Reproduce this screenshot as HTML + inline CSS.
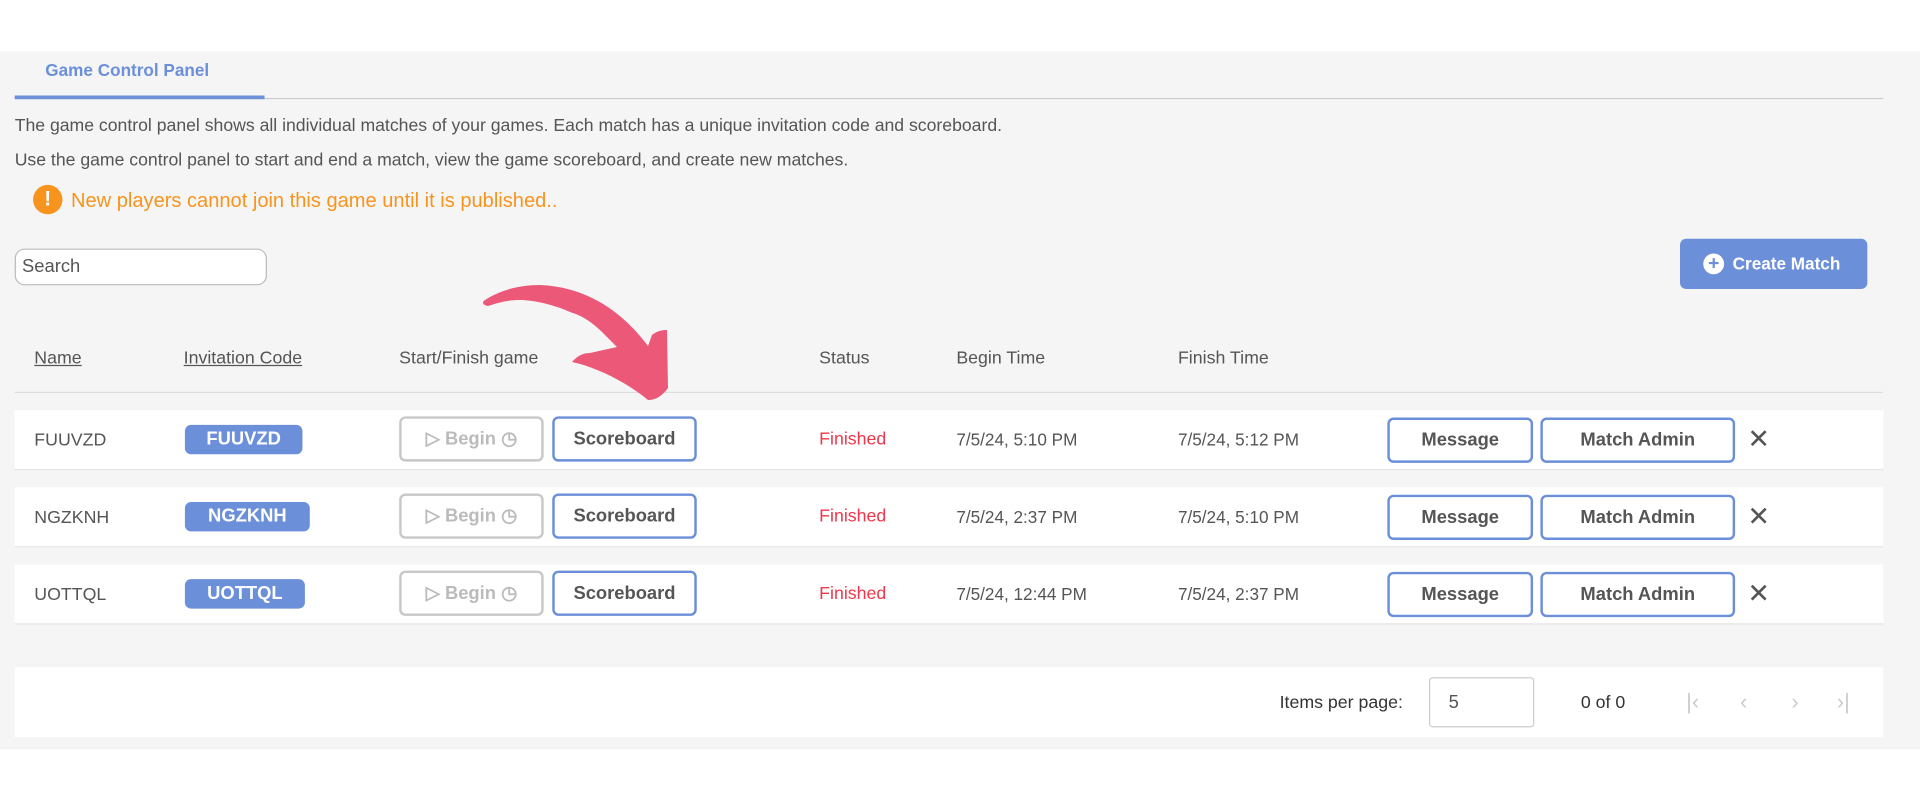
<!DOCTYPE html>
<html><head><meta charset="utf-8"><style>
html,body{margin:0;padding:0;width:1920px;height:800px;overflow:hidden;background:#fff;font-family:"Liberation Sans",sans-serif;}
#w{position:absolute;left:0;top:0;width:1568px;height:653px;transform:scale(1.22449);transform-origin:0 0;}
.a{position:absolute;white-space:nowrap;}
.bg{position:absolute;left:0;top:42px;width:1568px;height:570px;background:#f5f5f5;}
.row{position:absolute;left:12px;width:1526px;height:48px;background:#fff;border-bottom:1px solid #e4e4e4;}
.t{color:#555;font-size:14px;}
.badge{position:absolute;left:139px;top:12px;height:24px;line-height:24px;background:#6b8fd9;color:#fff;font-weight:bold;font-size:15px;border-radius:5px;text-align:center;}
.btn{position:absolute;box-sizing:border-box;border:2px solid #6b8fd9;border-radius:5px;background:#fff;color:#555;font-weight:bold;font-size:15px;text-align:center;height:37px;line-height:34px;}
.beg{border-color:#c8c8c8;color:#bbb;}
</style></head><body>
<div id="w">
<div class="bg"></div>
<div class="a" style="left:37px;top:49px;color:#6b8fd9;font-weight:bold;font-size:14px;">Game Control Panel</div>
<div class="a" style="left:12px;top:80px;width:1526px;height:1px;background:#ccc;"></div>
<div class="a" style="left:12px;top:78px;width:204px;height:3px;background:#6b8fd9;"></div>
<div class="a t" style="left:12px;top:95px;font-size:14.4px;">The game control panel shows all individual matches of your games. Each match has a unique invitation code and scoreboard.</div>
<div class="a t" style="left:12px;top:123px;font-size:14.4px;">Use the game control panel to start and end a match, view the game scoreboard, and create new matches.</div>
<div class="a" style="left:27px;top:151px;width:24px;height:24px;border-radius:50%;background:#f7941d;color:#fff;font-weight:bold;text-align:center;line-height:24px;font-size:17px;">!</div>
<div class="a" style="left:58px;top:155px;color:#f7941d;font-size:16.4px;">New players cannot join this game until it is published..</div>
<div class="a" style="left:12px;top:203px;width:206px;height:30px;box-sizing:border-box;border:1px solid #bbb;border-radius:8px;background:#fff;color:#555;font-size:15px;line-height:28px;padding-left:5px;">Search</div>
<div class="a" style="left:1372px;top:195px;width:153px;height:41px;background:#6b8fd9;border-radius:5px;color:#fff;font-weight:bold;font-size:14px;line-height:41px;">
<span style="position:absolute;left:19px;top:12px;width:17px;height:17px;border-radius:50%;background:#fff;color:#6b8fd9;line-height:17px;text-align:center;font-size:16px;">+</span><span style="position:absolute;left:43px;">Create Match</span></div>
<div class="a t" style="left:28px;top:285px;font-size:14.5px;text-decoration:underline;">Name</div>
<div class="a t" style="left:150px;top:285px;font-size:14.5px;text-decoration:underline;">Invitation Code</div>
<div class="a t" style="left:326px;top:285px;font-size:14.5px;">Start/Finish game</div>
<div class="a t" style="left:669px;top:285px;font-size:14.5px;">Status</div>
<div class="a t" style="left:781px;top:285px;font-size:14.5px;">Begin Time</div>
<div class="a t" style="left:962px;top:285px;font-size:14.5px;">Finish Time</div>
<div class="a" style="left:12px;top:320px;width:1526px;height:1px;background:#ddd;"></div>

<div class="row" style="top:335px;">
<div class="a t" style="left:16px;top:17px;font-size:14.5px;">FUUVZD</div>
<div class="badge" style="width:96px;">FUUVZD</div>
<div class="btn beg" style="left:314px;top:5px;width:118px;">▷ Begin ◷</div>
<div class="btn" style="left:439px;top:5px;width:118px;">Scoreboard</div>
<div class="a" style="left:657px;top:16px;color:#f0364a;font-size:14.5px;">Finished</div>
<div class="a t" style="left:769px;top:16px;">7/5/24, 5:10 PM</div>
<div class="a t" style="left:950px;top:16px;">7/5/24, 5:12 PM</div>
<div class="btn" style="left:1121px;top:6px;width:119px;">Message</div>
<div class="btn" style="left:1246px;top:6px;width:159px;">Match Admin</div>
<div class="a" style="left:1415px;top:11px;color:#555;font-size:22px;">✕</div>
</div>
<div class="row" style="top:398px;">
<div class="a t" style="left:16px;top:17px;font-size:14.5px;">NGZKNH</div>
<div class="badge" style="width:102px;">NGZKNH</div>
<div class="btn beg" style="left:314px;top:5px;width:118px;">▷ Begin ◷</div>
<div class="btn" style="left:439px;top:5px;width:118px;">Scoreboard</div>
<div class="a" style="left:657px;top:16px;color:#f0364a;font-size:14.5px;">Finished</div>
<div class="a t" style="left:769px;top:16px;">7/5/24, 2:37 PM</div>
<div class="a t" style="left:950px;top:16px;">7/5/24, 5:10 PM</div>
<div class="btn" style="left:1121px;top:6px;width:119px;">Message</div>
<div class="btn" style="left:1246px;top:6px;width:159px;">Match Admin</div>
<div class="a" style="left:1415px;top:11px;color:#555;font-size:22px;">✕</div>
</div>
<div class="row" style="top:461px;">
<div class="a t" style="left:16px;top:17px;font-size:14.5px;">UOTTQL</div>
<div class="badge" style="width:98px;">UOTTQL</div>
<div class="btn beg" style="left:314px;top:5px;width:118px;">▷ Begin ◷</div>
<div class="btn" style="left:439px;top:5px;width:118px;">Scoreboard</div>
<div class="a" style="left:657px;top:16px;color:#f0364a;font-size:14.5px;">Finished</div>
<div class="a t" style="left:769px;top:16px;">7/5/24, 12:44 PM</div>
<div class="a t" style="left:950px;top:16px;">7/5/24, 2:37 PM</div>
<div class="btn" style="left:1121px;top:6px;width:119px;">Message</div>
<div class="btn" style="left:1246px;top:6px;width:159px;">Match Admin</div>
<div class="a" style="left:1415px;top:11px;color:#555;font-size:22px;">✕</div>
</div>

<div class="a" style="left:12px;top:545px;width:1526px;height:57px;background:#fff;"></div>
<div class="a" style="left:1045px;top:566px;color:#333;font-size:14.5px;">Items per page:</div>
<div class="a" style="left:1167px;top:553px;width:86px;height:41px;box-sizing:border-box;border:1px solid #ccc;border-radius:3px;background:#fff;color:#555;font-size:15px;line-height:39px;padding-left:15px;">5</div>
<div class="a" style="left:1291px;top:566px;color:#333;font-size:14.5px;">0 of 0</div>
<div class="a" style="left:1377px;top:563px;color:#ccc;font-size:18px;">|‹</div>
<div class="a" style="left:1421px;top:563px;color:#ccc;font-size:18px;">‹</div>
<div class="a" style="left:1463px;top:563px;color:#ccc;font-size:18px;">›</div>
<div class="a" style="left:1500px;top:563px;color:#ccc;font-size:18px;">›|</div>
</div>
<svg style="position:absolute;left:0;top:0" width="1920" height="800">
<path fill="#eb5878" d="M485,300 C500,290 520,285 540,285 C590,287 625,315 648,346 L652,335 C657,331 662,330 667,330 L668,388 C662,396 656,400 648,400 C630,385 600,368 572,362 C578,355 584,353 590,353 L617,347 C600,330 590,318 570,312 C550,303 530,300 520,300 C505,300 495,304 488,306 C482,305 482,302 485,300 Z"/>
</svg>
</body></html>
